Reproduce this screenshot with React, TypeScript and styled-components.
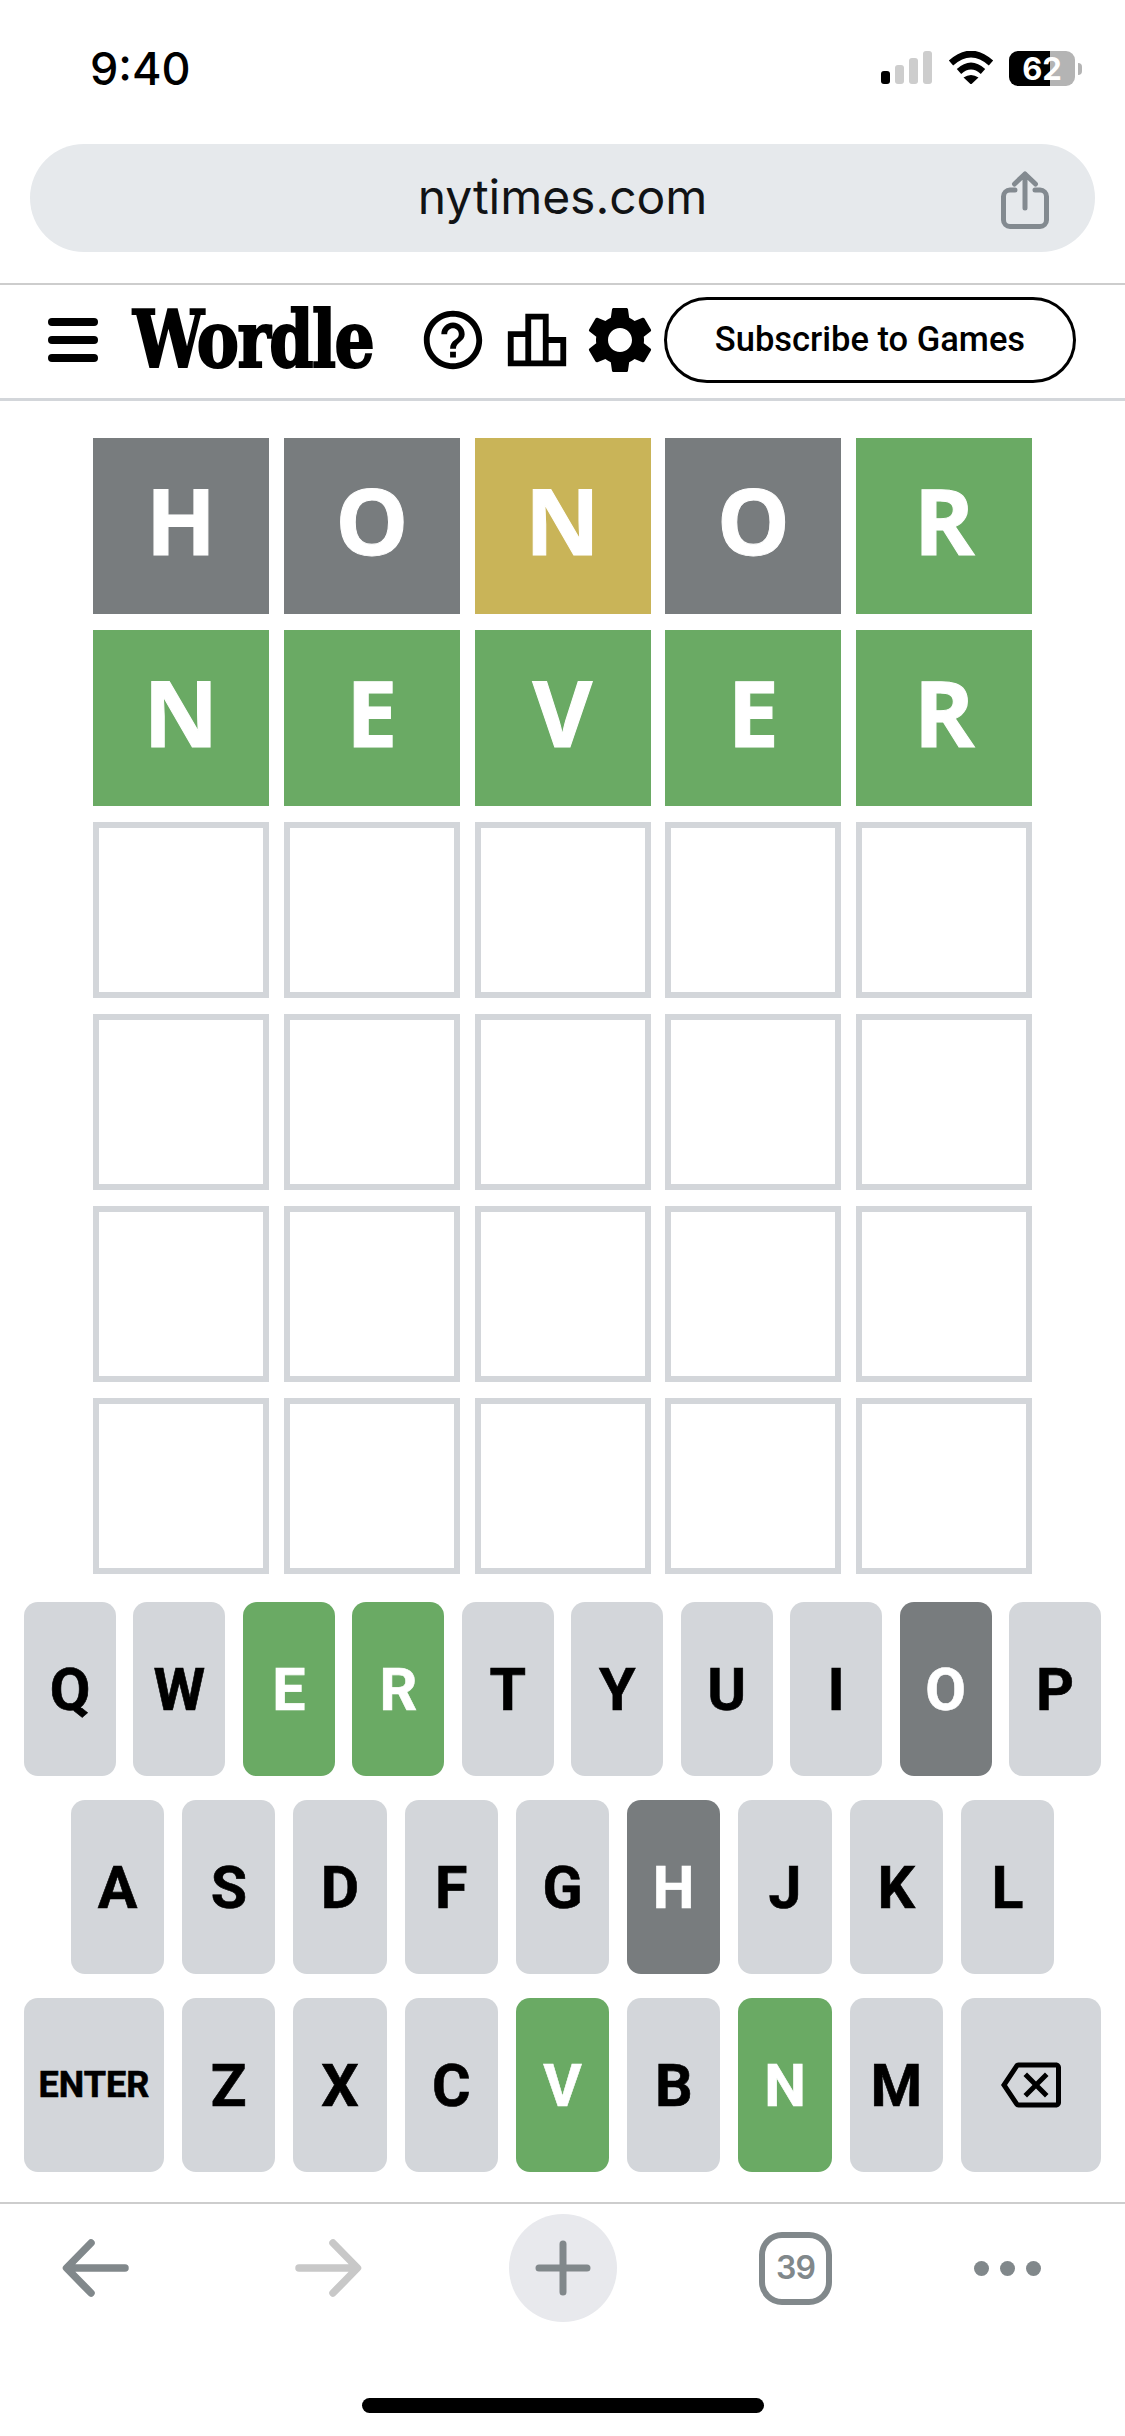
import React from "react";
import styled, { createGlobalStyle } from "styled-components";

const Global = createGlobalStyle`
  html, body { margin: 0; padding: 0; background: #fff; }
  #root { width: 1125px; height: 2436px; overflow: hidden; }
  * { box-sizing: border-box; }
`;

type Status = "absent" | "present" | "correct" | "empty";
const colors: Record<Status, string> = {
  absent: "#787c7e",
  present: "#c9b458",
  correct: "#6aaa64",
  empty: "#d3d6da",
};

const Page = styled.div`
  width: 1125px;
  height: 2436px;
  display: flex;
  flex-direction: column;
  background: #fff;
  font-family: "Open Sans", "Liberation Sans", sans-serif;
`;

const StatusBar = styled.div`
  height: 144px;
  padding: 48px 43px 0 90px;
  display: flex;
  justify-content: space-between;
  align-items: flex-start;
`;
const Time = styled.div`
  font: 500 45px/42px Inter, sans-serif;
  color: #000;
`;
const StatusIcons = styled.div`
  display: flex;
  align-items: flex-start;
  margin-top: 3px;
`;
const BatteryWrap = styled.div`
  width: 66px;
  height: 35px;
  margin-left: 15px;
  border-radius: 9px;
  background: linear-gradient(90deg, #000 0 41px, #b4b4b4 41px);
  display: flex;
  align-items: center;
  justify-content: center;
  color: #fff;
  font: 700 31px/35px Inter, sans-serif;
`;
const BatteryCap = styled.div`
  width: 4px;
  height: 12px;
  margin: 12px 0 0 3px;
  border-radius: 0 4px 4px 0;
  background: #b4b4b4;
`;

const UrlWrap = styled.div`
  padding: 0 30px 31px;
`;
const UrlPill = styled.div`
  position: relative;
  height: 108px;
  border-radius: 54px;
  background: #e6e9ec;
  display: flex;
  align-items: center;
  justify-content: center;
  padding-bottom: 2px;
  font: 400 48px/1 Inter, sans-serif;
  letter-spacing: -0.05px;
  color: #111315;
`;
const ShareSlot = styled.div`
  position: absolute;
  right: 46px;
  top: 27px;
  width: 48px;
  height: 58px;
  line-height: 0;
`;

const Header = styled.div`
  height: 118px;
  border-top: 2px solid #cdcdcd;
  border-bottom: 3px solid #d3d6da;
  display: flex;
  align-items: center;
  padding: 0 0 4px 48px;
`;
const Burger = styled.div`
  width: 50px;
  display: flex;
  flex-direction: column;
  gap: 10px;
`;
const BurgerBar = styled.div`
  height: 8px;
  border-radius: 4px;
  background: #000;
`;
const Logo = styled.div`
  width: 240px;
  margin-left: 35px;
  font-family: "DejaVu Serif Condensed", "DejaVu Serif", serif;
  font-stretch: condensed;
  font-weight: 700;
  font-size: 78px;
  line-height: 80px;
  color: #000;
  -webkit-text-stroke: 2px #000;
  letter-spacing: -1.6px;
  white-space: nowrap;
  transform: scaleX(0.9);
  transform-origin: left center;
`;
const IconSlot = styled.div<{ $size: number; $left: number }>`
  width: ${(p) => p.$size}px;
  height: ${(p) => p.$size}px;
  margin-left: ${(p) => p.$left}px;
  flex: none;
  line-height: 0;
`;
const Subscribe = styled.div`
  width: 412px;
  height: 86px;
  margin-left: 4px;
  border: 3px solid #000;
  border-radius: 43px;
  display: flex;
  align-items: center;
  justify-content: center;
  font: 500 34.5px/1 Roboto, sans-serif;
  color: #000;
  flex: none;
`;

const Board = styled.div`
  margin: 37px 0 0 93px;
  display: grid;
  grid-template-columns: repeat(5, 176px);
  grid-auto-rows: 176px;
  column-gap: 14.75px;
  row-gap: 16px;
`;
const Tile = styled.div<{ $s: Status }>`
  background: ${(p) => (p.$s === "empty" ? "#fff" : colors[p.$s])};
  border: ${(p) => (p.$s === "empty" ? "6px solid #d3d6da" : "none")};
  color: #fff;
  font-weight: 700;
  font-size: 92px;
  line-height: 1;
  -webkit-text-stroke: 1px #fff;
  padding-bottom: 12px;
  display: flex;
  align-items: center;
  justify-content: center;
`;

const Keyboard = styled.div`
  margin-top: 28px;
  padding: 0 24px;
  display: flex;
  flex-direction: column;
  gap: 24px;
`;
const KeyRow = styled.div<{ $inset?: number; $gap: number }>`
  display: flex;
  gap: ${(p) => p.$gap}px;
  padding: 0 ${(p) => p.$inset ?? 0}px;
`;
const Key = styled.div<{ $s?: Status; $wide?: boolean }>`
  flex: ${(p) => (p.$wide ? "0 0 140px" : "1 1 0")};
  height: 174px;
  border-radius: 14px;
  background: ${(p) => (p.$s ? colors[p.$s] : "#d3d6da")};
  color: ${(p) => (p.$s ? "#fff" : "#000")};
  font-family: Roboto, sans-serif;
  font-weight: 700;
  font-size: 59px;
  line-height: 1;
  -webkit-text-stroke: 0.6px currentColor;
  display: flex;
  align-items: center;
  justify-content: center;
`;
const EnterLabel = styled.span`
  font-size: 36px;
`;

const Nav = styled.div`
  margin-top: 30px;
  border-top: 2px solid #cdcdcd;
  padding: 10px 0 0 62px;
  display: grid;
  grid-template-columns: 233px 214px 250px 215px 67px;
  align-items: center;
  justify-items: start;
`;
const PlusCircle = styled.div`
  width: 108px;
  height: 108px;
  border-radius: 50%;
  background: #e8e9ed;
  display: flex;
  align-items: center;
  justify-content: center;
  line-height: 0;
`;
const Tabs = styled.div`
  width: 73px;
  height: 73px;
  border: 6.5px solid #81888b;
  border-radius: 23px;
  display: flex;
  align-items: center;
  justify-content: center;
  font: 600 32px/1 Inter, sans-serif;
  color: #81888b;
  letter-spacing: -1px;
`;
const Dots = styled.div`
  width: 67px;
  display: flex;
  justify-content: space-between;
`;
const Dot = styled.div`
  width: 15px;
  height: 15px;
  border-radius: 50%;
  background: #81888b;
`;
const HomeBar = styled.div`
  width: 402px;
  height: 15px;
  margin: 76px auto 0;
  border-radius: 8px;
  background: #000;
`;
const WifiIcon = styled.svg`
  margin-left: 15px;
`;

const rows: [string, Status[]][] = [
  ["HONOR", ["absent", "absent", "present", "absent", "correct"]],
  ["NEVER", ["correct", "correct", "correct", "correct", "correct"]],
];
const keyStates: Record<string, Status> = {
  E: "correct",
  R: "correct",
  V: "correct",
  N: "correct",
  O: "absent",
  H: "absent",
};

const Arrow = ({ dir, color }: { dir: "l" | "r"; color: string }) => (
  <svg width="67" height="58" viewBox="0 0 67 58" fill="none" stroke={color} strokeWidth="7.5" strokeLinecap="round" strokeLinejoin="round">
    {dir === "l" ? (
      <path d="M63 29H5M29 4L4.5 29L29 54" />
    ) : (
      <path d="M4 29H62M38 4L62.5 29L38 54" />
    )}
  </svg>
);

const Backspace = () => (
  <svg width="60" height="60" viewBox="0 0 24 24" fill="#000" stroke="none">
    <path d="M22 3H7c-.69 0-1.23.35-1.59.88L0 12l5.41 8.11c.36.53.9.89 1.59.89h15c1.1 0 2-.9 2-2V5c0-1.1-.9-2-2-2zm0 16H7.07L2.4 12l4.66-7H22v14zm-11.59-2L14 13.41 17.59 17 19 15.59 15.41 12 19 8.41 17.59 7 14 10.59 10.41 7 9 8.41 12.59 12 9 15.59z" />
  </svg>
);

export default function App() {
  const tiles: { c: string; s: Status }[] = [];
  rows.forEach(([w, st]) => w.split("").forEach((c, i) => tiles.push({ c, s: st[i] })));
  while (tiles.length < 30) tiles.push({ c: "", s: "empty" });

  const renderKey = (k: string) => (
    <Key key={k} $s={keyStates[k]}>
      {k}
    </Key>
  );

  return (
    <Page>
      <Global />
      <StatusBar>
        <Time>9:40</Time>
        <StatusIcons>
          <svg width="52" height="33" viewBox="0 0 52 33">
            <rect x="0" y="20" width="9" height="13" rx="3" fill="#000" />
            <rect x="14" y="14" width="9" height="19" rx="3" fill="#cdcdcd" />
            <rect x="28" y="7" width="9" height="26" rx="3" fill="#cdcdcd" />
            <rect x="42" y="0" width="9" height="33" rx="3" fill="#cdcdcd" />
          </svg>
          <WifiIcon width="46" height="33" viewBox="0 0 46 33" fill="none">
            <path d="M3 12Q23 -6 43 12" stroke="#000" strokeWidth="6.5" />
            <path d="M11 20.5Q23 9.5 35 20.5" stroke="#000" strokeWidth="6.5" />
            <path d="M15.5 26.5Q23 21.5 30.5 26.5L23 33.5Z" fill="#000" />
          </WifiIcon>
          <BatteryWrap>62</BatteryWrap>
          <BatteryCap />
        </StatusIcons>
      </StatusBar>

      <UrlWrap>
        <UrlPill>
          nytimes.com
          <ShareSlot>
            <svg width="48" height="58" viewBox="0 0 48 58" fill="none" stroke="#838a90" strokeWidth="5" strokeLinecap="round" strokeLinejoin="round">
              <path d="M14 19H9a6.5 6.5 0 0 0-6.5 6.5V49a6.5 6.5 0 0 0 6.5 6.5h30a6.5 6.5 0 0 0 6.5-6.5V25.500a6.500 6.500 0 0 0-6.500-6.500h-5" />
              <path d="M24 37V3M13.500 13L24 3L34.500 13" />
            </svg>
          </ShareSlot>
        </UrlPill>
      </UrlWrap>

      <Header>
        <Burger>
          <BurgerBar />
          <BurgerBar />
          <BurgerBar />
        </Burger>
        <Logo>Wordle</Logo>
        <IconSlot $size={70} $left={45}>
          <svg width="70" height="70" viewBox="0 0 24 24" fill="#000">
            <path d="M11 18h2v-2h-2v2zm1-16C6.48 2 2 6.48 2 12s4.48 10 10 10 10-4.480 10-10S17.520 2 12 2zm0 18c-4.410 0-8-3.590-8-8s3.590-8 8-8 8 3.590 8 8-3.590 8-8 8zm0-14c-2.210 0-4 1.790-4 4h2c0-1.100.9-2 2-2s2 .9 2 2c0 2-3 1.750-3 5h2c0-2.250 3-2.500 3-5 0-2.210-1.790-4-4-4z" />
          </svg>
        </IconSlot>
        <IconSlot $size={70} $left={14}>
          <svg width="70" height="70" viewBox="0 0 24 24" fill="#000">
            <path d="M16,11V3H8v6H2v12h20V11H16z M10,5h4v14h-4V5z M4,11h4v8H4V11z M20,19h-4v-6h4V19z" />
          </svg>
        </IconSlot>
        <IconSlot $size={80} $left={8}>
          <svg width="80" height="80" viewBox="0 0 24 24" fill="#000">
            <path d="M19.14,12.94c0.04-0.3,0.06-0.61,0.06-0.94c0-0.32-0.02-0.64-0.07-0.94l2.03-1.58c0.18-0.14,0.23-0.41,0.12-0.61 l-1.92-3.32c-0.12-0.22-0.37-0.29-0.59-0.22l-2.39,0.96c-0.5-0.38-1.03-0.7-1.62-0.94L14.4,2.81c-0.04-0.24-0.24-0.41-0.48-0.41 h-3.84c-0.24,0-0.43,0.17-0.47,0.41L9.25,5.35C8.66,5.59,8.12,5.92,7.63,6.29L5.24,5.33c-0.22-0.08-0.47,0-0.59,0.22L2.74,8.87 C2.62,9.08,2.66,9.34,2.86,9.48l2.03,1.58C4.84,11.36,4.8,11.69,4.8,12s0.02,0.64,0.07,0.94l-2.03,1.58 c-0.18,0.14-0.23,0.41-0.12,0.61l1.92,3.32c0.12,0.22,0.37,0.29,0.59,0.22l2.39-0.96c0.5,0.38,1.03,0.7,1.62,0.94l0.36,2.54 c0.05,0.24,0.24,0.41,0.48,0.41h3.84c0.24,0,0.44-0.17,0.47-0.41l0.36-2.54c0.59-0.24,1.13-0.56,1.62-0.94l2.39,0.96 c0.22,0.08,0.47,0,0.59-0.22l1.92-3.32c0.12-0.22,0.07-0.47-0.12-0.61L19.14,12.94z M12,15.6c-1.98,0-3.6-1.62-3.6-3.6 s1.62-3.6,3.6-3.6s3.6,1.62,3.6,3.6S13.98,15.6,12,15.6z" />
          </svg>
        </IconSlot>
        <Subscribe>Subscribe to Games</Subscribe>
      </Header>

      <Board>
        {tiles.map((t, i) => (
          <Tile key={i} $s={t.s}>
            {t.c}
          </Tile>
        ))}
      </Board>

      <Keyboard>
        <KeyRow $gap={17.5}>{"QWERTYUIOP".split("").map(renderKey)}</KeyRow>
        <KeyRow $gap={18} $inset={47}>{"ASDFGHJKL".split("").map(renderKey)}</KeyRow>
        <KeyRow $gap={18}>
          <Key $wide>
            <EnterLabel>ENTER</EnterLabel>
          </Key>
          {"ZXCVBNM".split("").map(renderKey)}
          <Key $wide>
            <Backspace />
          </Key>
        </KeyRow>
      </Keyboard>

      <Nav>
        <Arrow dir="l" color="#81888b" />
        <Arrow dir="r" color="#c8c8c8" />
        <PlusCircle>
          <svg width="56" height="56" viewBox="0 0 56 56" stroke="#81888b" strokeWidth="7" strokeLinecap="round">
            <path d="M28 4V52M4 28H52" />
          </svg>
        </PlusCircle>
        <Tabs>39</Tabs>
        <Dots>
          <Dot />
          <Dot />
          <Dot />
        </Dots>
      </Nav>
      <HomeBar />
    </Page>
  );
}
